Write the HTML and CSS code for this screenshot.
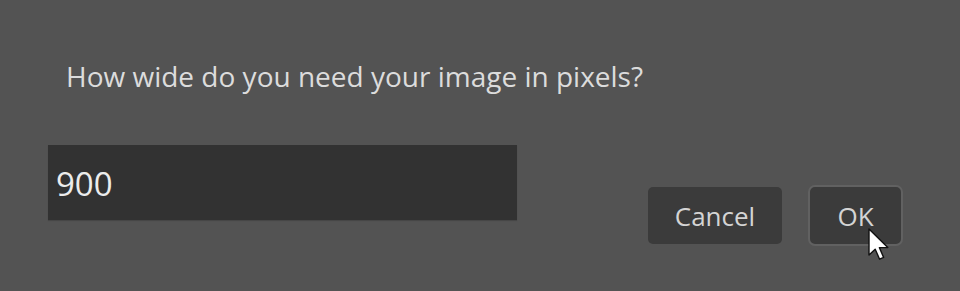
FILE: index.html
```html
<!DOCTYPE html>
<html lang="en">
<head>
<meta charset="utf-8">
<title>Image width</title>
<link rel="stylesheet" href="styles.css">
</head>
<body>
<div class="dialog">
  <p class="question">How wide do you need your image in pixels?</p>
  <div class="row">
    <div class="input">900</div>
    <div class="actions">
      <button class="btn cancel">Cancel</button>
      <button class="btn ok">OK
        <svg class="cursor" width="26" height="34" viewBox="0 0 13 17"><path d="M0.5 0.5 L0.5 13.5 L3.6 10.6 L5.8 15.6 L7.8 14.7 L5.7 9.8 L9.9 9.8 Z" fill="#fff" stroke="#111" stroke-width="0.7" stroke-linejoin="round"/></svg>
      </button>
    </div>
  </div>
</div>
</body>
</html>
```

FILE: styles.css
```css
html, body {
  margin: 0;
  padding: 0;
  background: #535353;
  height: 100%;
}
body {
  font-family: "Open Sans", "Noto Sans", sans-serif;
  color: #dadada;
  overflow: hidden;
}
.dialog {
  padding: 58px 0 0 48px;
}
.question {
  margin: 0 0 0 18px;
  font-size: 28px;
  line-height: 36px;
  color: #dcdcdc;
}
.row {
  display: flex;
  align-items: flex-start;
  margin-top: 51px;
}
.input {
  width: 469px;
  height: 75px;
  box-sizing: border-box;
  background: #323232;
  padding-left: 8px;
  font-size: 33px;
  line-height: 78px;
  color: #ececec;
  box-shadow: 0 1px 1px rgba(0,0,0,0.15);
}
.actions {
  display: flex;
  align-items: center;
  gap: 26px;
  margin-left: 131px;
  margin-top: 40px;
}
.btn {
  position: relative;
  box-sizing: border-box;
  font-family: "Open Sans", "Noto Sans", sans-serif;
  font-size: 26px;
  color: #d4d4d4;
  background: #3b3b3b;
  border: none;
  border-radius: 5px;
  padding: 0;
}
.cancel {
  width: 134px;
  height: 57px;
}
.ok {
  width: 95px;
  height: 61px;
  border: 2px solid #616161;
  border-radius: 7px;
}
.cursor {
  position: absolute;
  left: 58px;
  top: 41px;
}
```
